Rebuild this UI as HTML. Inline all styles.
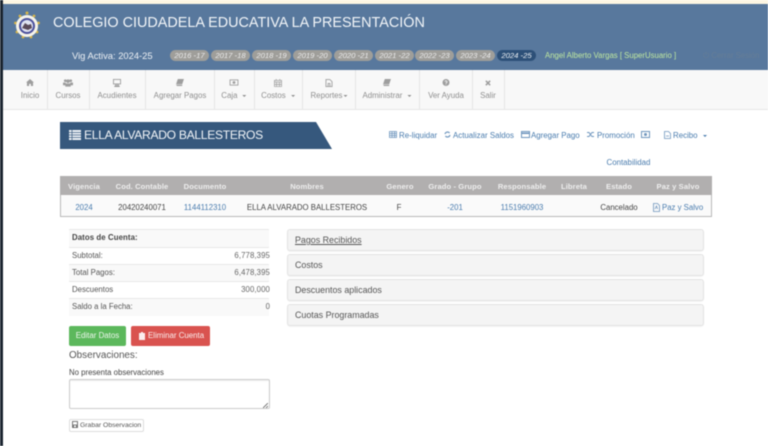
<!DOCTYPE html>
<html lang="es"><head><meta charset="utf-8"><title>Colegio</title>
<style>
html,body{margin:0;padding:0;background:#fff}
body{width:768px;height:446px;overflow:hidden;position:relative;font-family:"Liberation Sans",sans-serif;color:#555}
#p{position:absolute;left:0;top:0;width:768px;height:446px;filter:blur(.45px)}
#p div,#p span.a,#p svg.a{position:absolute;white-space:nowrap}
.pill{top:50px;height:11px;width:39px;border-radius:6px;background:#9f9e9a;color:#ececec;font:italic 7.7px/11px "Liberation Sans",sans-serif;text-align:center}
.nav{top:90px;font-size:7.9px;line-height:11px;color:#8f8f8f;text-align:center;transform:translateX(-50%)}
.sep{top:70px;width:1px;height:39px;background:#e6e6e6}
.ic{top:79px;transform:translateX(-50%);font-size:0;opacity:.8}
.lnk{color:#4a7cae;font-size:7.9px;line-height:11px}
.th{top:181px;font-size:7.6px;font-weight:bold;line-height:11px;color:#eee;transform:translateX(-50%);letter-spacing:.1px}
.td{top:202px;font-size:7.8px;line-height:11px;color:#444;transform:translateX(-50%)}
.td.b{color:#4a7cae}
.row{left:69px;width:201px;font-size:7.8px;line-height:11px;color:#555}
.val{right:498px;font-size:7.8px;line-height:11px;color:#666;letter-spacing:.1px}
.acc{left:287px;width:415px;height:20px;background:#f4f4f4;border:1px solid #e3e3e3;border-radius:3px;box-shadow:0 1px 1px rgba(0,0,0,.05)}
.acct{left:295px;font-size:8.9px;line-height:12px;color:#555}
svg{display:block}
svg.l{opacity:.75}
i.c{display:inline-block;width:0;height:0;border:2px solid transparent;border-top:2px solid currentColor;border-bottom:0;margin-left:3px;vertical-align:1px}
</style></head><body><div id="p">
<div style="left:0;top:0;width:768px;height:4px;background:#fdf6e3"></div>
<div style="left:3px;top:4px;width:765px;height:66px;background:#58789d"></div>
<div style="left:3px;top:70px;width:765px;height:39px;background:#f8f8f8;border-bottom:1px solid #e7e7e7"></div>
<div style="left:0;top:0;width:3px;height:446px;background:#1b2530"></div>

<svg class="a" style="left:14px;top:11px" width="26" height="28" viewBox="0 0 26 28">
<g fill="#d9b64a"><circle cx="13" cy="2" r="1.500"/><circle cx="20" cy="5" r="1.400"/><circle cx="24.500" cy="12" r="1.400"/><circle cx="23" cy="21" r="1.400"/><circle cx="17" cy="26" r="1.400"/><circle cx="9" cy="26" r="1.400"/><circle cx="3" cy="21" r="1.400"/><circle cx="1.500" cy="12" r="1.400"/><circle cx="6" cy="5" r="1.400"/></g>
<circle cx="13" cy="15" r="11" fill="#f6f4ea"/><circle cx="13" cy="15" r="8" fill="#4a4f9c"/><circle cx="13" cy="15" r="6" fill="#dfe3f2"/><path d="M8 17l3-5 3 2 3-1 1 4-4 2z" fill="#5a4a5a"/></svg>

<div style="left:53px;top:14px;font-size:14.4px;line-height:18px;color:#f2f5f8">COLEGIO CIUDADELA EDUCATIVA LA PRESENTACIÓN</div>
<div style="left:72px;top:50px;font-size:9.4px;line-height:12px;color:#edf1f5">Vig Activa: 2024-25</div>
<div class="pill" style="left:170px">2016 -17</div>
<div class="pill" style="left:211px">2017 -18</div>
<div class="pill" style="left:252px">2018 -19</div>
<div class="pill" style="left:293px">2019 -20</div>
<div class="pill" style="left:334px">2020 -21</div>
<div class="pill" style="left:375px">2021 -22</div>
<div class="pill" style="left:415px">2022 -23</div>
<div class="pill" style="left:456px">2023 -24</div>
<div class="pill" style="left:497px;background:#2d5078;color:#eef2f6">2024 -25</div>
<div style="left:545px;top:50px;font-size:7.8px;line-height:11px;color:#bfe8a0">Angel Alberto Vargas [ SuperUsuario ]</div>
<div style="left:703px;top:50px;font-size:7.8px;line-height:11px;color:#667d96">⏻ Cerrar Sesión</div>

<div class="sep" style="left:47px"></div><div class="sep" style="left:89px"></div><div class="sep" style="left:145px"></div><div class="sep" style="left:214px"></div><div class="sep" style="left:254px"></div><div class="sep" style="left:302px"></div><div class="sep" style="left:355px"></div><div class="sep" style="left:419px"></div><div class="sep" style="left:472px"></div><div class="sep" style="left:504px"></div>

<div class="ic" style="left:30px"><svg width="8" height="7" viewBox="0 0 9 8"><path d="M4.5 0L9 4H8v4H5.500V5.500h-2V8H1V4H0z" fill="#888"/></svg></div>
<div class="ic" style="left:68px"><svg width="10" height="8" viewBox="0 0 11 8"><g fill="#888"><circle cx="2.500" cy="1.500" r="1.500"/><circle cx="8.500" cy="1.500" r="1.500"/><circle cx="5.500" cy="2" r="2"/><rect x="0" y="3.500" width="3" height="3"/><rect x="8" y="3.500" width="3" height="3"/><rect x="2.500" y="4.500" width="6" height="3.500"/></g></svg></div>
<div class="ic" style="left:117px"><svg width="8" height="8" viewBox="0 0 9 9"><path d="M.5.500h8v5h-8zM3 6h3v1.500H3zM2 8h5v1H2z" fill="none" stroke="#888"/></svg></div>
<div class="ic" style="left:180px"><svg width="8" height="7" viewBox="0 0 9 8"><path d="M2 0h7L7 6H0zM0 6.500h7V8H1z" fill="#888"/></svg></div>
<div class="ic" style="left:234px"><svg width="9" height="7" viewBox="0 0 10 8"><rect x=".5" y="1" width="9" height="6" fill="none" stroke="#888"/><circle cx="5" cy="4" r="1.600" fill="#888"/></svg></div>
<div class="ic" style="left:278px"><svg width="8" height="8" viewBox="0 0 9 9"><path d="M.5 1.500h8v7h-8zM.5 3.500h8M3 3.500v5M6 3.500v5M.5 6h8M2.500 0v2M6.500 0v2" fill="none" stroke="#888" stroke-width=".8"/></svg></div>
<div class="ic" style="left:329px"><svg width="7" height="8" viewBox="0 0 8 9"><path d="M.5.500h4.500l2.500 2.500v5.500h-7zM3 5h2v3.500H3z" fill="none" stroke="#888"/></svg></div>
<div class="ic" style="left:387px"><svg width="8" height="7" viewBox="0 0 9 8"><path d="M2 0h7L7 6H0zM0 6.500h7V8H1z" fill="#888"/></svg></div>
<div class="ic" style="left:446px"><svg width="7" height="7" viewBox="0 0 8 8"><circle cx="4" cy="4" r="4" fill="#888"/><path d="M2.800 3a1.200 1.200 0 1 1 1.200 1.500v.7M4 6v.8" stroke="#f8f8f8" stroke-width=".9" fill="none"/></svg></div>
<div class="ic" style="left:488px"><svg width="6" height="6" viewBox="0 0 7 7" style="margin-top:1px"><path d="M1 1l5 5M6 1L1 6" stroke="#888" stroke-width="1.800"/></svg></div>

<div class="nav" style="left:30px">Inicio</div>
<div class="nav" style="left:68px">Cursos</div>
<div class="nav" style="left:117px">Acudientes</div>
<div class="nav" style="left:180px">Agregar Pagos</div>
<div class="nav" style="left:234px">Caja <i class="c"></i></div>
<div class="nav" style="left:278px">Costos <i class="c"></i></div>
<div class="nav" style="left:329px">Reportes<i class="c" style="margin-left:1px"></i></div>
<div class="nav" style="left:387px">Administrar <i class="c"></i></div>
<div class="nav" style="left:446px">Ver Ayuda</div>
<div class="nav" style="left:488px">Salir</div>

<svg class="a" style="left:60px;top:122px" width="273" height="27" viewBox="0 0 273 27"><path d="M0 0H256L272 27H0z" fill="#36587d"/></svg>
<svg class="a" style="left:69px;top:130px" width="12" height="10" viewBox="0 0 12 10"><path d="M0 0h12v10H0z" fill="#eef2f6"/><path d="M0 2.500h12M0 5h12M0 7.500h12M3 0v10" stroke="#36587d" stroke-width=".7"/></svg>
<div style="left:84px;top:127px;font-size:12.1px;line-height:16px;color:#f2f5f8;letter-spacing:-.3px">ELLA ALVARADO BALLESTEROS</div>

<svg class="a l" style="left:389px;top:131px" width="8" height="7" viewBox="0 0 8 7"><path d="M.5.500h7v6h-7zM.5 2.500h7M.5 4.500h7M3 .5v6M5.500.5v6" fill="none" stroke="#3f73a8" stroke-width=".8"/></svg>
<div class="lnk" style="left:399px;top:129.500px">Re-liquidar</div>
<svg class="a l" style="left:444px;top:131px" width="7" height="7" viewBox="0 0 7 7"><path d="M1 3a2.600 2.600 0 0 1 4.600-1M6 4a2.600 2.600 0 0 1-4.600 1" fill="none" stroke="#3f73a8" stroke-width="1.200"/></svg>
<div class="lnk" style="left:453px;top:129.500px">Actualizar Saldos</div>
<svg class="a l" style="left:521px;top:131px" width="9" height="7" viewBox="0 0 9 7"><path d="M.5.500h8v6h-8z" fill="none" stroke="#3f73a8"/><path d="M0 1.500h9v1.500H0z" fill="#3f73a8"/></svg>
<div class="lnk" style="left:531px;top:129.500px">Agregar Pago</div>
<svg class="a l" style="left:587px;top:131px" width="8" height="7" viewBox="0 0 8 7"><path d="M0 1.500h2l3 4h2M0 5.500h2l3-4h2" fill="none" stroke="#3f73a8"/></svg>
<div class="lnk" style="left:597px;top:129.500px">Promoción</div>
<svg class="a l" style="left:641px;top:131px" width="9" height="7" viewBox="0 0 9 7"><rect x=".5" y=".5" width="8" height="6" fill="none" stroke="#3f73a8"/><circle cx="4.500" cy="3.500" r="1.500" fill="#3f73a8"/></svg>
<svg class="a l" style="left:664px;top:131px" width="7" height="8" viewBox="0 0 7 8"><path d="M.5.500h4l2 2v5h-6zM2 5h3" fill="none" stroke="#3f73a8" stroke-width=".8"/></svg>
<div class="lnk" style="left:673px;top:129.500px">Recibo <i class="c"></i></div>
<div class="lnk" style="left:606.500px;top:157px">Contabilidad</div>

<div style="left:60px;top:176px;width:652px;height:19px;background:#b1afaf"></div>
<div style="left:60px;top:195px;width:650px;background:#fafafa;border:1px solid #b9b9b9;border-top:0;height:21px"></div>
<div class="th" style="left:84px">Vigencia</div>
<div class="th" style="left:142px">Cod. Contable</div>
<div class="th" style="left:205px">Documento</div>
<div class="th" style="left:307px">Nombres</div>
<div class="th" style="left:400px">Genero</div>
<div class="th" style="left:455px">Grado - Grupo</div>
<div class="th" style="left:522px">Responsable</div>
<div class="th" style="left:574px">Libreta</div>
<div class="th" style="left:619px">Estado</div>
<div class="th" style="left:678px">Paz y Salvo</div>
<div class="td b" style="left:84px">2024</div>
<div class="td" style="left:142px">20420240071</div>
<div class="td b" style="left:205px">1144112310</div>
<div class="td" style="left:307px">ELLA ALVARADO BALLESTEROS</div>
<div class="td" style="left:399px">F</div>
<div class="td b" style="left:455px">-201</div>
<div class="td b" style="left:522px">1151960903</div>
<div class="td" style="left:619px">Cancelado</div>
<svg class="a l" style="left:653px;top:203px" width="7" height="9" viewBox="0 0 7 9"><path d="M.5.500h4l2 2v6h-6zM2 6l1.500-3 1 3" fill="none" stroke="#3f73a8" stroke-width=".8"/></svg>
<div class="td b" style="left:662px;transform:none">Paz y Salvo</div>

<div style="left:69px;top:229px;width:200px;height:17px;background:#f9f9f9;border-top:1px solid #e8e8e8;border-bottom:1px solid #e8e8e8"></div>
<div style="left:69px;top:264px;width:200px;height:16px;background:#f9f9f9;border-top:1px solid #e8e8e8;border-bottom:1px solid #e8e8e8"></div>
<div style="left:69px;top:298px;width:200px;height:17px;background:#f9f9f9;border-top:1px solid #e8e8e8"></div>
<div class="row" style="left:72px;top:232px;font-weight:bold;color:#444;letter-spacing:.1px">Datos de Cuenta:</div>
<div class="row" style="left:72px;top:250px">Subtotal:</div><div class="val" style="top:250px">6,778,395</div>
<div class="row" style="left:72px;top:267px">Total Pagos:</div><div class="val" style="top:267px">6,478,395</div>
<div class="row" style="left:72px;top:284px">Descuentos</div><div class="val" style="top:284px">300,000</div>
<div class="row" style="left:72px;top:301px">Saldo a la Fecha:</div><div class="val" style="top:301px">0</div>

<div style="left:69px;top:326px;width:57px;height:20px;background:#5cb85c;border-radius:2px;color:#eef7ee;font-size:7.9px;line-height:20px;text-align:center">Editar Datos</div>
<div style="left:131px;top:326px;width:79px;height:20px;background:#d9534f;border-radius:2px;color:#fbeeee;font-size:7.9px;line-height:20px;text-indent:17px">Eliminar Cuenta</div>
<svg class="a" style="left:139px;top:332px" width="6" height="8" viewBox="0 0 6 8"><path d="M0 1h2V0h2v1h2v7H0z" fill="#fbeeee"/></svg>
<div style="left:69px;top:349px;font-size:9.9px;line-height:14px;color:#555">Observaciones:</div>
<div style="left:69px;top:367px;font-size:7.8px;line-height:11px;color:#444">No presenta observaciones</div>
<div style="left:69px;top:379px;width:199px;height:28px;background:#fff;border:1px solid #ccc;border-radius:2px;box-shadow:inset 0 1px 1px rgba(0,0,0,.08)"></div>
<svg class="a" style="left:263px;top:403px" width="5" height="5" viewBox="0 0 5 5"><path d="M0 5L5 0M3 5L5 3" stroke="#666" stroke-width=".8"/></svg>
<div style="left:69px;top:419px;width:73px;height:11px;border:1px solid #ddd;border-radius:2px;background:#fff"></div>
<svg class="a" style="left:72px;top:421px" width="6" height="7" viewBox="0 0 6 7"><path d="M.5.500h5v6h-5zM1.500 4h3v2.500h-3z" fill="none" stroke="#555" stroke-width=".8"/></svg>
<div style="left:80px;top:420px;font-size:6.8px;line-height:11px;color:#555">Grabar Observacion</div>

<div class="acc" style="top:229px"></div>
<div class="acc" style="top:254px"></div>
<div class="acc" style="top:279px"></div>
<div class="acc" style="top:304px"></div>
<div class="acct" style="top:234px;text-decoration:underline">Pagos Recibidos</div>
<div class="acct" style="top:259px">Costos</div>
<div class="acct" style="top:284px">Descuentos aplicados</div>
<div class="acct" style="top:309px">Cuotas Programadas</div>
</div></body></html>
